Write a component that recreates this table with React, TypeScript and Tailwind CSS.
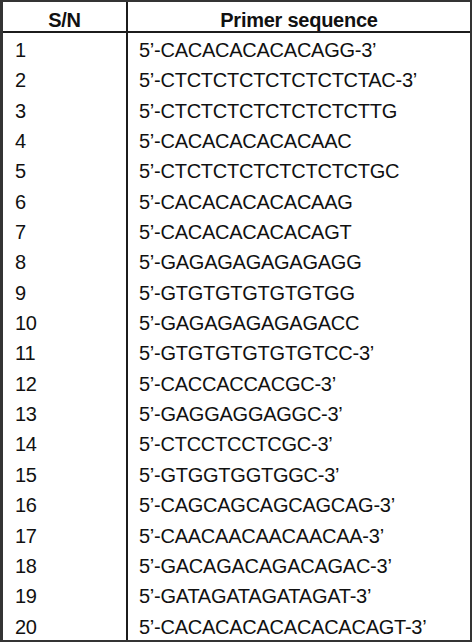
const primers = [
  "5’-CACACACACACAGG-3’",
  "5’-CTCTCTCTCTCTCTCTAC-3’",
  "5’-CTCTCTCTCTCTCTCTTG",
  "5’-CACACACACACAAC",
  "5’-CTCTCTCTCTCTCTCTGC",
  "5’-CACACACACACAAG",
  "5’-CACACACACACAGT",
  "5’-GAGAGAGAGAGAGG",
  "5’-GTGTGTGTGTGTGG",
  "5’-GAGAGAGAGAGACC",
  "5’-GTGTGTGTGTGTCC-3’",
  "5’-CACCACCACGC-3’",
  "5’-GAGGAGGAGGC-3’",
  "5’-CTCCTCCTCGC-3’",
  "5’-GTGGTGGTGGC-3’",
  "5’-CAGCAGCAGCAGCAG-3’",
  "5’-CAACAACAACAACAA-3’",
  "5’-GACAGACAGACAGAC-3’",
  "5’-GATAGATAGATAGAT-3’",
  "5’-CACACACACACACACAGT-3’",
]

export default function App() {
  return (
    <div className="w-[474px] h-[642px] bg-white font-['Liberation_Sans',Arial,sans-serif] text-xl leading-[22px] tracking-[-0.25px] text-[#111]">
      <div className="w-[472px] h-[642px] border-t-2 border-b-2 border-l-[3px] border-r-2 border-[#343434]">
        <div className="flex h-[31px] border-b-2 border-[#1c1c1c] font-bold">
          <div className="w-[125px] border-r-2 border-[#1c1c1c] pt-[7px] text-center">S/N</div>
          <div className="flex-1 pt-[7px] text-center">Primer sequence</div>
        </div>
        {primers.map((seq, i) => (
          <div key={i} className="flex h-[30.35px]">
            <div className="w-[125px] border-r-2 border-[#1c1c1c] pt-[6px] pl-[12px]">{i + 1}</div>
            <div className="flex-1 pt-[6px] pl-[11px]">{seq}</div>
          </div>
        ))}
      </div>
    </div>
  )
}
